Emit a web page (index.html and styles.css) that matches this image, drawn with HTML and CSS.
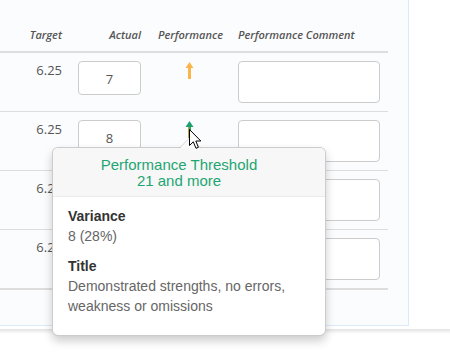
FILE: index.html
```html
<!DOCTYPE html>
<html lang="en">
<head>
    <meta charset="UTF-8">
    <meta name="viewport" content="width=device-width, initial-scale=1.0">
    <title>Performance Review</title>
    <link rel="stylesheet" href="styles.css">
</head>
<body>

    <div class="page">
        <div class="panel">
            <div class="score-table">
                <div class="score-row head">
                    <div class="col-target">Target</div>
                    <div></div>
                    <div class="col-actual">Actual</div>
                    <div></div>
                    <div class="col-perf">Performance</div>
                    <div></div>
                    <div class="col-comment">Performance Comment</div>
                </div>

                <div class="score-row">
                    <div class="col-target">6.25</div>
                    <div></div>
                    <div class="col-actual"><input class="actual-input" type="text" value="7"></div>
                    <div></div>
                    <div class="col-perf">
                        <svg class="perf-arrow" width="9" height="17" viewBox="0 0 9 17">
                            <path d="M4.5 0 L8.5 6 L6 6 L6 17 L3 17 L3 6 L0.5 6 Z" fill="#fcb54b"/>
                        </svg>
                    </div>
                    <div></div>
                    <div class="col-comment"><textarea class="comment-box"></textarea></div>
                </div>

                <div class="score-row">
                    <div class="col-target">6.25</div>
                    <div></div>
                    <div class="col-actual"><input class="actual-input" type="text" value="8"></div>
                    <div></div>
                    <div class="col-perf">
                        <svg class="perf-arrow" width="9" height="17" viewBox="0 0 9 17">
                            <path d="M4.5 0 L8.5 6 L6 6 L6 17 L3 17 L3 6 L0.5 6 Z" fill="#1c9f72"/>
                            <rect x="3" y="6" width="1.5" height="11" fill="#b9a83a"/>
                        </svg>
                    </div>
                    <div></div>
                    <div class="col-comment"><textarea class="comment-box"></textarea></div>
                </div>

                <div class="score-row">
                    <div class="col-target">6.25</div>
                    <div></div>
                    <div class="col-actual"><input class="actual-input" type="text" value="9"></div>
                    <div></div>
                    <div class="col-perf"></div>
                    <div></div>
                    <div class="col-comment"><textarea class="comment-box"></textarea></div>
                </div>

                <div class="score-row last">
                    <div class="col-target">6.25</div>
                    <div></div>
                    <div class="col-actual"><input class="actual-input" type="text" value="6"></div>
                    <div></div>
                    <div class="col-perf"></div>
                    <div></div>
                    <div class="col-comment"><textarea class="comment-box"></textarea></div>
                </div>
            </div>
        </div>
        <div class="shade"></div>

        <!-- popover shown on hover of the performance arrow -->
        <div class="popover">
            <div class="popover-arrow"></div>
            <div class="popover-title">Performance Threshold<br>21 and more</div>
            <div class="popover-content">
                <p><b>Variance</b><br>8 (28%)</p>
                <p><b>Title</b><br>Demonstrated strengths, no errors, weakness or omissions</p>
            </div>
        </div>

        <svg class="cursor" width="13" height="21" viewBox="0 0 13 21">
            <path d="M0.5 0.5 L0.5 16.5 L4.3 12.8 L7 19.3 L9.4 18.3 L6.8 12 L11.8 12 Z" fill="#fff" stroke="#000" stroke-width="1" stroke-linejoin="round"/>
        </svg>
    </div>

</body>
</html>
```

FILE: styles.css
```css
body {
    margin: 0;
    padding: 0;
    background-color: #fff;
    font-family: "Open Sans", Arial, sans-serif;
    color: #555;
}

.page {
    position: relative;
    width: 450px;
    height: 352px;
    overflow: hidden;
}

.panel {
    width: 408px;
    height: 325px;
    background-color: #fbfcfe;
    border-right: 1px solid #dbe9f8;
    border-bottom: 1px solid #dbe9f8;
}

.shade {
    margin-top: 3px;
    height: 5px;
    background: linear-gradient(#e2e2e2, #fff);
}

.score-table {
    width: 388px;
}

.score-row {
    display: grid;
    grid-template-columns: 62px 16px 63px 17px 63px 17px 150px;
    padding: 8px 0;
    border-bottom: 1px solid #ddd;
    font-size: 13px;
    line-height: 18px;
}

.score-row.head {
    padding: 27px 0 9px;
    line-height: 15px;
    font-size: 11px;
    font-style: italic;
    font-weight: 600;
    color: #555;
    border-bottom: 2px solid #ddd;
}

.score-row.last {
    border-bottom: 2px solid #ddd;
}

.col-target,
.col-actual {
    text-align: right;
}

.col-perf {
    text-align: center;
}

.actual-input {
    box-sizing: border-box;
    width: 63px;
    height: 34px;
    padding: 2px 0 0;
    border: 1px solid #ccc;
    border-radius: 4px;
    background-color: #fff;
    font-family: "Open Sans", Arial, sans-serif;
    font-size: 13px;
    color: #555;
    text-align: center;
}

.perf-arrow {
    display: block;
    margin: 1px auto 0;
}

.comment-box {
    display: block;
    box-sizing: border-box;
    width: 142px;
    height: 42px;
    border: 1px solid #ccc;
    border-radius: 4px;
    background-color: #fff;
    resize: none;
}

.popover {
    position: absolute;
    left: 52px;
    top: 147px;
    width: 272px;
    background-color: #fff;
    border: 1px solid rgba(0, 0, 0, 0.2);
    border-radius: 6px;
    box-shadow: 0 5px 10px rgba(0, 0, 0, 0.2);
    font-family: "Liberation Sans", Arial, sans-serif;
    font-size: 14px;
    line-height: 20px;
    color: #666;
}

.popover-arrow {
    position: absolute;
    left: 126px;
    top: -11px;
    width: 0;
    height: 0;
    border-left: 11px solid transparent;
    border-right: 11px solid transparent;
    border-bottom: 11px solid rgba(0, 0, 0, 0.15);
}

.popover-arrow::after {
    content: "";
    position: absolute;
    left: -10px;
    top: 1px;
    border-left: 10px solid transparent;
    border-right: 10px solid transparent;
    border-bottom: 10px solid #f9f9f9;
}

.popover-title {
    padding: 9px 34px 7px 14px;
    background-color: #f7f7f7;
    border-bottom: 1px solid #ebebeb;
    border-radius: 5px 5px 0 0;
    font-size: 15px;
    line-height: 16px;
    color: #1ea672;
    text-align: center;
}

.popover-content {
    padding: 9px 15px;
}

.popover-content p {
    margin: 0 0 10px;
}

.popover-content b {
    color: #333;
}

.cursor {
    position: absolute;
    left: 189px;
    top: 129px;
}
```
